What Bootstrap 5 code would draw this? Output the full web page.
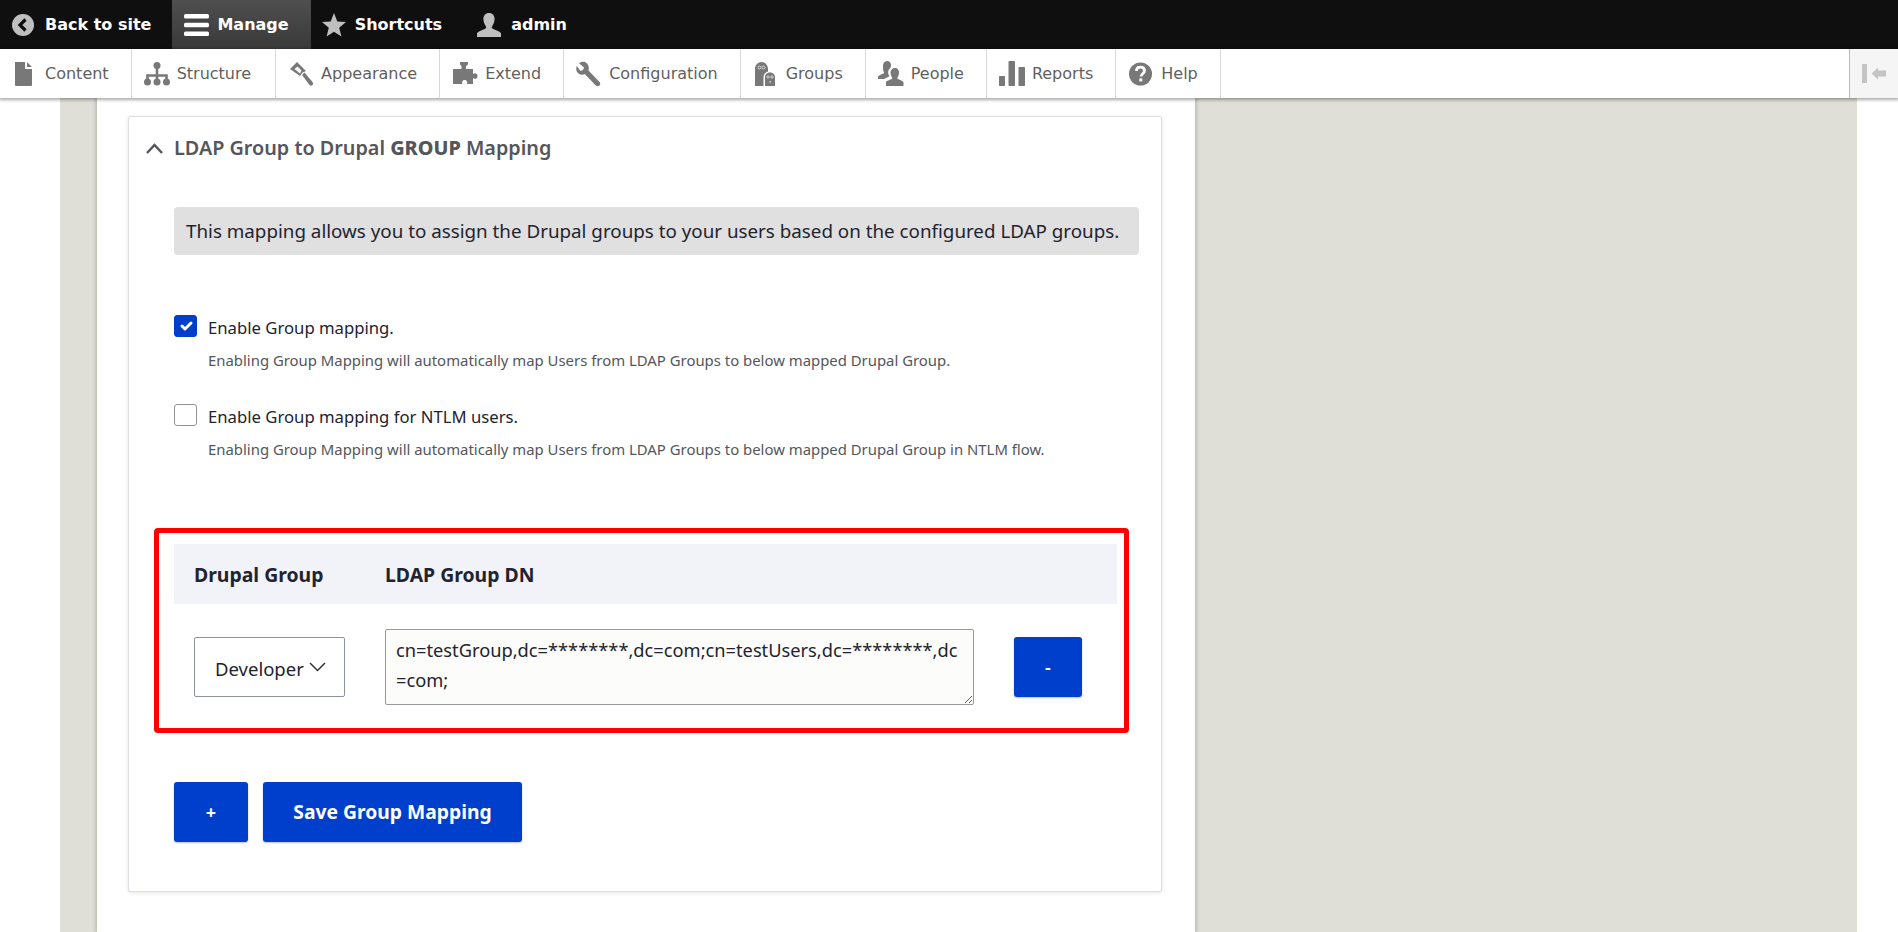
<!DOCTYPE html>
<html lang="en">
<head>
<meta charset="utf-8">
<title>LDAP Group Mapping</title>
<link href="https://cdn.jsdelivr.net/npm/bootstrap@5.3.0/dist/css/bootstrap.min.css" rel="stylesheet">
<style>
html,body{height:100%;overflow:hidden}
body{font-family:"Noto Sans",sans-serif;color:#222330;background:#fff}
.top-bar{height:49px;background:#0f0f0f;font-family:"DejaVu Sans",sans-serif;font-weight:700;font-size:16px;color:#fff}
.top-item{height:49px;padding:0 11px 0 12px;gap:10px;color:#fff;text-decoration:none}
.top-item svg{flex:none}
.top-back{gap:11px;padding-right:10px}
.top-item.is-active{background:linear-gradient(180deg,#4f4f4f,#393939);gap:8px;padding-right:22px;margin-left:11px}
.top-star{padding-left:11px;gap:9px}
.tray{height:49px;background:#fff;font-family:"DejaVu Sans",sans-serif;font-size:16px;color:#5f5f5f;box-shadow:0 1px 3px 1px rgba(0,0,0,.33);position:relative;z-index:2}
.tray-item{height:49px;padding:0 22px 0 12px;gap:7px;border-right:1px solid #d9d9d9;color:#5f5f5f;text-decoration:none}
.tray-item svg{flex:none}
.tray-wide{padding-right:24px}
.tray-toggle{width:49px;height:49px;background:#f5f5f5;border-left:1px solid #bbb}
.frame{margin:0 41px 0 60px;padding-left:37px;background:#dfdfd8;height:834px}
.panel{width:1098px;height:834px;background:#fff;padding:18px 33px 0 31px;box-shadow:0 0 4px 1px rgba(0,0,0,.22)}
.map-card{height:776px;border:1px solid #dedfe4;border-radius:2px;background:#fff;box-shadow:0 1px 4px rgba(0,0,0,.1);padding:0 0 0 25px}
.map-head{height:62px;margin-left:-8px;gap:11px;font-size:19.800px;font-weight:600;color:#55565b}
.map-head b{font-weight:800}
.note-box{margin:28px 22px 0 20px;height:48px;padding:1px 12px 0;background:#e0e0e0;border-radius:4px;font-size:18.800px}
.opt-row{margin-left:20px;gap:11px}
.opt-row .form-check-input{width:23px;height:22px;margin:0;flex:none;border:1px solid #919297;border-radius:3px}
.opt-row .form-check-input:checked{background-color:#003ecc;border-color:#003ecc}
.opt-one{margin-top:60px}
.opt-two{margin-top:34px}
.opt-label{font-size:16.700px;line-height:26px;margin-top:0}
.opt-desc{font-size:14.900px;line-height:20px;color:#55565b;margin-top:9px}
.red-zone{margin-top:69px;width:975px;height:205px;border:5px solid #f00;border-radius:4px;padding:11px 7px 0 15px}
.map-grid{width:100%;table-layout:fixed;border-collapse:collapse}
.map-grid th{height:60px;background:#f2f3f8;font-size:19.400px;font-weight:700;color:#222330;padding:2px 0 0 20px}
.map-grid td{padding:25px 0 0 20px;vertical-align:middle}
.col-a{width:191px}.col-b{width:609px}
.role-pick{display:block;width:151px;height:60px;border:1px solid #8e929c;border-radius:2px;padding:3px 0 0 20px;font-size:18.500px;color:#222330;appearance:none;background:#fff url("data:image/svg+xml,%3Csvg xmlns='http://www.w3.org/2000/svg' viewBox='0 0 17 10'%3E%3Cpath d='M1 1l7.500 7.500L16 1' fill='none' stroke='%23333' stroke-width='1.500'/%3E%3C/svg%3E") no-repeat 114px 24px/17px 10px;font-family:inherit}
.dn-box{display:block;width:589px;height:76px;border:1px solid #999;border-radius:2px;background:#fcfcfa;font-size:18.250px;line-height:30px;padding:5px 10px 3px;color:#222330;font-family:inherit}
.act-btn{display:block;height:60px;border:0;border-radius:3px;background:#003ecc;color:#fff;font-weight:700;box-shadow:0 1px 2px rgba(0,0,0,.25);font-size:19.300px}
.act-btn:hover{background:#003ecc;color:#fff}
.map-grid td.drop-cell{padding:25px 0 0 40px}
.btn-drop{width:68px;font-size:18px;font-weight:600}
.btn-add{width:74px;font-size:18px}
.btn-save{width:259px;padding:1px 0 0}
.act-row{margin:49px 0 0 20px;gap:15px}
.ms-admin{margin-left:12px}
</style>
</head>
<body>
<nav class="top-bar d-flex align-items-center">
  <a class="top-item top-back d-flex align-items-center" href="#"><svg width="22" height="22" viewBox="0 0 22 22"><circle cx="11" cy="11" r="11" fill="#bfbfbf"/><path d="M13.500 5.500L8 11l5.500 5.500" fill="none" stroke="#0f0f0f" stroke-width="3.200"/></svg><span>Back to site</span></a>
  <a class="top-item is-active d-flex align-items-center" href="#"><svg width="25" height="22" viewBox="0 0 25 22"><g fill="#fff"><rect y="0" width="25" height="4.500" rx="1.500"/><rect y="8.700" width="25" height="4.500" rx="1.500"/><rect y="17.500" width="25" height="4.500" rx="1.500"/></g></svg><span>Manage</span></a>
  <a class="top-item top-star d-flex align-items-center" href="#"><svg width="24" height="24" viewBox="0 0 24 24"><path d="M12 0l3.300 8.400 8.700.6-6.800 5.700 2.200 8.900L12 18.700 4.600 23.600l2.200-8.900L0 9l8.700-.6z" fill="#bfbfbf"/></svg><span>Shortcuts</span></a>
  <a class="top-item ms-admin d-flex align-items-center" href="#"><svg width="24" height="24" viewBox="0 0 24 24"><path d="M12 0c3.600 0 5.600 2.700 5.600 6 0 3-1.400 5.600-2.600 7.400-.5 1 0 2 1.300 2.600 3 1.300 6.700 2.600 7.700 4.300V24H0v-3.700c1-1.700 4.700-3 7.700-4.300 1.300-.6 1.800-1.600 1.300-2.600C7.800 11.600 6.400 9 6.400 6 6.400 2.700 8.400 0 12 0z" fill="#bfbfbf"/></svg><span>admin</span></a>
</nav>
<div class="tray d-flex justify-content-between">
  <div class="d-flex">
    <a class="tray-item d-flex align-items-center" href="#"><svg width="26" height="26" viewBox="0 0 26 26"><path d="M3 1h10v7h7v16a1 1 0 0 1-1 1H4a1 1 0 0 1-1-1zM15 1l5 5h-5z" fill="#787878"/></svg><span>Content</span></a>
    <a class="tray-item tray-wide d-flex align-items-center" href="#"><svg width="26" height="26" viewBox="0 0 26 26"><g fill="#787878"><circle cx="13" cy="4.500" r="3.500"/><circle cx="3.500" cy="21" r="3.500"/><circle cx="13" cy="21" r="3.500"/><circle cx="22.500" cy="21" r="3.500"/></g><path d="M13 6v14M3.500 19v-4.500h19V19" fill="none" stroke="#787878" stroke-width="2.600"/></svg><span>Structure</span></a>
    <a class="tray-item d-flex align-items-center" href="#"><svg width="26" height="26" viewBox="0 0 26 26"><path d="M2 8l7-7 9 9-3.500 1.500L12 15 2 8zm4.500 0l5.500 4.500 1.500-3-4-4z" fill="#787878" fill-rule="evenodd"/><path d="M14 14l2.500-2.500 8 9.500a2 2 0 0 1-3 3z" fill="#787878"/></svg><span>Appearance</span></a>
    <a class="tray-item d-flex align-items-center" href="#"><svg width="26" height="26" viewBox="0 0 26 26"><path d="M8 1h8v2.500l-2 1.500v3h7v5c1.500-1.500 4.500-1 4.500 2s-3 3.500-4.500 2v6h-6c1-2-.5-4-2.500-4S9.500 21 10.500 23h-9.500V8h8.500V5L8 3.500z" fill="#787878"/></svg><span>Extend</span></a>
    <a class="tray-item d-flex align-items-center" href="#"><svg width="26" height="26" viewBox="0 0 26 26"><path d="M9 1c-2-.6-4.500-.2-6 1.300L8 6.500 7 9l-2.500 1L.8 5C-.5 8 .5 11 2.500 12.500c2 1.400 4.500 1.500 6.300.5l11 11.600c1 1 2.600 1 3.700 0 1-1 1-2.700 0-3.700L12.500 9.500C13.500 6 12 2.500 9 1z" fill="#787878"/></svg><span>Configuration</span></a>
    <a class="tray-item d-flex align-items-center" href="#"><svg width="26" height="26" viewBox="0 0 26 26"><path d="M2 25V8c0-4 3-7 6.500-7S15 4 15 8v2.500c-2.500.6-4.500 3-4.500 5.500v9z" fill="#787878"/><path d="M12 25V16c0-2.500 2.200-4.500 5-4.500s5 2 5 4.500v9z" fill="#787878"/><g fill="none" stroke="#e8e8e8" stroke-width=".8"><circle cx="6.500" cy="6.500" r="1.500"/><circle cx="10.500" cy="6.500" r="1.500"/><circle cx="15" cy="16" r="1.200"/><circle cx="19" cy="16" r="1.200"/></g><rect x="16.500" y="20" width="1.200" height="1.600" fill="#e8e8e8"/></svg><span>Groups</span></a>
    <a class="tray-item d-flex align-items-center" href="#"><svg width="26" height="26" viewBox="0 0 26 26"><path d="M9 0c2.500 0 4 1.800 4 4 0 1.200-.3 2.300-.8 3.300-1.500 1-2.200 2.800-2 4.800.1 1.200.6 2.300 1.300 3.200-2.200 1-4 2-5.500 2.700H0v-2.500c1-1.200 3-2 5-2.800 1-.5 1.200-1 .8-1.800C5 9.500 5 7.500 5 5c0-2.700 1.500-5 4-5z" fill="#787878"/><path d="M17 7c2.500 0 4 2 4 4.500 0 2-.8 4-1.500 5-.4.800-.1 1.300.8 1.800 2 .8 4.200 1.500 5.200 2.700V25H8v-4c1-1.200 3.300-2 5.300-2.700.9-.5 1.200-1 .8-1.800-.8-1.200-1.600-3-1.600-5C12.500 9 14.500 7 17 7z" fill="#787878"/></svg><span>People</span></a>
    <a class="tray-item d-flex align-items-center" href="#"><svg width="26" height="26" viewBox="0 0 26 26"><g fill="#787878"><rect x="0" y="15" width="6" height="10" rx=".8"/><rect x="9.500" y="0" width="6.500" height="25" rx=".8"/><rect x="19.500" y="6" width="6.500" height="19" rx=".8"/></g></svg><span>Reports</span></a>
    <a class="tray-item d-flex align-items-center" href="#"><svg width="26" height="26" viewBox="0 0 26 26"><circle cx="12.500" cy="13" r="11.500" fill="#787878"/><path d="M8.500 10c0-2.500 1.800-3.800 4-3.800s4 1.300 4 3.500c0 3-3.500 3-3.500 5.800" fill="none" stroke="#fff" stroke-width="2.800"/><rect x="11.300" y="17.400" width="3" height="3" fill="#fff"/></svg><span>Help</span></a>
  </div>
  <div class="tray-toggle d-flex align-items-center justify-content-center"><svg width="24" height="19" viewBox="0 0 24 19"><g fill="#c4c4c4"><rect x="0" y="0" width="5" height="19"/><path d="M9.500 9.500L16 3.500v3h8v6h-8v3z"/></g></svg></div>
</div>
<div class="frame">
  <main class="panel">
    <section class="map-card">
      <div class="map-head d-flex align-items-center"><svg width="17" height="11" viewBox="0 0 17 11"><path d="M1 10l7.500-8L16 10" fill="none" stroke="#55565b" stroke-width="2.500"/></svg><span>LDAP Group to Drupal <b>GROUP</b> Mapping</span></div>
      <div class="note-box d-flex align-items-center">This mapping allows you to assign the Drupal groups to your users based on the configured LDAP groups.</div>
      <div class="opt-row opt-one d-flex">
        <input class="form-check-input" type="checkbox" checked aria-label="Enable Group mapping">
        <div><div class="opt-label">Enable Group mapping.</div><div class="opt-desc">Enabling Group Mapping will automatically map Users from LDAP Groups to below mapped Drupal Group.</div></div>
      </div>
      <div class="opt-row opt-two d-flex">
        <input class="form-check-input" type="checkbox" aria-label="Enable Group mapping for NTLM users">
        <div><div class="opt-label">Enable Group mapping for NTLM users.</div><div class="opt-desc">Enabling Group Mapping will automatically map Users from LDAP Groups to below mapped Drupal Group in NTLM flow.</div></div>
      </div>
      <div class="red-zone">
        <table class="map-grid">
          <thead><tr><th class="col-a">Drupal Group</th><th class="col-b">LDAP Group DN</th><th></th></tr></thead>
          <tbody><tr>
            <td><select class="role-pick" aria-label="Drupal Group"><option>Developer</option></select></td>
            <td><textarea class="dn-box" aria-label="LDAP Group DN">cn=testGroup,dc=********,dc=com;cn=testUsers,dc=********,dc=com;</textarea></td>
            <td class="drop-cell"><button class="btn act-btn btn-drop" type="button">-</button></td>
          </tr></tbody>
        </table>
      </div>
      <div class="act-row d-flex">
        <button class="btn act-btn btn-add" type="button">+</button>
        <button class="btn act-btn btn-save" type="button">Save Group Mapping</button>
      </div>
    </section>
  </main>
</div>
</body>
</html>
